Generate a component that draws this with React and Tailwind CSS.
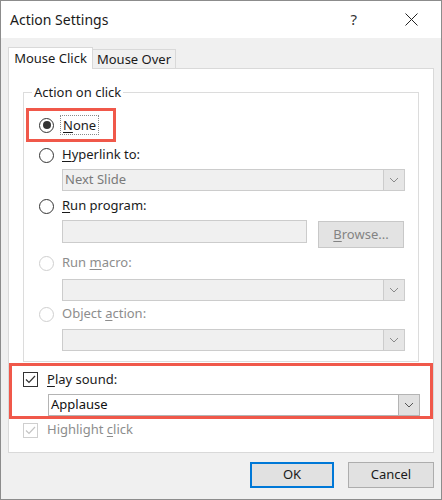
import React from 'react';

const font = { fontFamily: '"Noto Sans", "Open Sans", Arial, sans-serif' };

function Chevron({ color = '#555' }) {
  return (
    <svg width="10" height="6" viewBox="0 0 10 6" fill="none">
      <path d="M1 1l4 4 4-4" stroke={color} strokeWidth="1" />
    </svg>
  );
}

function Combo({ value, disabled, className = '' }) {
  return (
    <div
      className={`flex h-[22px] items-stretch border ${
        disabled ? 'border-[#cccccc] bg-[#f0f0f0]' : 'border-[#b4b4b4] bg-white'
      } ${className}`}
    >
      <div
        className={`flex flex-1 items-center pl-[2px] text-[13px] ${
          disabled ? 'text-[#7a7a7a]' : 'text-[#111]'
        }`}
      >
        {value}
      </div>
      <div
        className={`flex w-[21px] items-center justify-center border-l ${
          disabled ? 'border-[#cccccc] bg-[#e6e6e6]' : 'border-[#b4b4b4] bg-[#e1e1e1]'
        }`}
      >
        <Chevron color={disabled ? '#8a8a8a' : '#555'} />
      </div>
    </div>
  );
}

function Radio({ checked, disabled }) {
  return (
    <span
      className={`flex h-[15px] w-[15px] shrink-0 items-center justify-center rounded-full border bg-white ${
        disabled ? 'border-[#cfcfcf]' : 'border-[#333]'
      }`}
    >
      {checked && <span className="h-[8px] w-[8px] rounded-full bg-[#333]" />}
    </span>
  );
}

function Check({ disabled }) {
  return (
    <span
      className={`flex h-[15px] w-[15px] shrink-0 items-center justify-center border bg-white ${
        disabled ? 'border-[#cfcfcf]' : 'border-[#333]'
      }`}
    >
      <svg width="11" height="9" viewBox="0 0 11 9" fill="none">
        <path d="M1 4.5l3 3L10 1" stroke={disabled ? '#c4c4c4' : '#333'} strokeWidth="1.2" />
      </svg>
    </span>
  );
}

function Key({ children }) {
  return <span className="underline underline-offset-2 decoration-1">{children}</span>;
}

export default function App() {
  return (
    <div
      className="flex h-[500px] w-[442px] flex-col border border-[#8c8c8c] bg-[#f0f0f0] text-[#1a1a1a]"
      style={font}
    >
      <div className="flex h-[37px] shrink-0 items-center bg-white pl-[9px] pr-[23px]">
        <span className="flex-1 text-[14px]">Action Settings</span>
        <span className="mr-[48px] text-[15px] text-[#333]">?</span>
        <svg width="13" height="13" viewBox="0 0 13 13" fill="none">
          <path d="M0.5 0.5l12 12M12.5 0.5l-12 12" stroke="#222" strokeWidth="1" />
        </svg>
      </div>

      <div className="flex flex-1 flex-col px-[7px] pt-[9px]">
        <div className="relative z-10 flex h-[21px] items-end text-[13px]">
          <div className="-mb-px flex h-[22px] w-[85px] items-center justify-center border border-b-0 border-[#d9d9d9] bg-white">
            Mouse Click
          </div>
          <div className="flex h-[19px] w-[83px] items-center justify-center border border-b-0 border-l-0 border-[#d9d9d9] bg-[#f0f0f0] pt-[2px]">
            Mouse Over
          </div>
        </div>

        <div className="flex h-[385px] flex-col border border-[#d9d9d9] bg-white text-[13px]">
          <fieldset className="mx-[14px] mt-[14px] border border-[#dcdcdc] pb-[10px]">
            <legend className="ml-[8px] px-[2px] leading-[18px]">Action on click</legend>

            <div className="ml-[2px] mt-[7px] flex h-[34px] w-[90px] items-center border-[3px] border-[#f0584a] pl-[10px]">
              <Radio checked />
              <span className="ml-[6px] border border-dotted border-[#8a8a8a] px-[2px] leading-[18px]">
                <Key>N</Key>one
              </span>
            </div>

            <div className="ml-[15px] mt-[3px] flex h-[20px] items-center">
              <Radio />
              <span className="ml-[8px]">
                <Key>H</Key>yperlink to:
              </span>
            </div>
            <Combo value="Next Slide" disabled className="ml-[38px] mr-[13px] mt-[4px]" />

            <div className="ml-[15px] mt-[5px] flex h-[20px] items-center">
              <Radio />
              <span className="ml-[8px]">
                <Key>R</Key>un program:
              </span>
            </div>
            <div className="ml-[38px] mr-[14px] mt-[4px] flex h-[28px] items-start justify-between">
              <div className="h-[23px] w-[245px] border border-[#cccccc] bg-[#f0f0f0]" />
              <div className="mt-px flex h-[27px] w-[86px] items-center justify-center border border-[#c8c8c8] bg-[#e3e3e3] text-[#838383]">
                <span>
                  <Key>B</Key>rowse...
                </span>
              </div>
            </div>

            <div className="ml-[15px] mt-[5px] flex h-[20px] items-center text-[#8d8d8d]">
              <Radio disabled />
              <span className="ml-[8px]">
                Run <Key>m</Key>acro:
              </span>
            </div>
            <Combo value="" disabled className="ml-[38px] mr-[13px] mt-[6px]" />

            <div className="ml-[15px] mt-[3px] flex h-[20px] items-center text-[#8d8d8d]">
              <Radio disabled />
              <span className="ml-[8px]">
                Object <Key>a</Key>ction:
              </span>
            </div>
            <Combo value="" disabled className="ml-[38px] mr-[13px] mt-[5px]" />
          </fieldset>

          <div className="mt-px flex h-[56px] flex-col border-[3px] border-[#f0584a]">
            <div className="ml-[11px] mt-[4px] flex h-[19px] items-center">
              <Check />
              <span className="ml-[9px]">
                <Key>P</Key>lay sound:
              </span>
            </div>
            <Combo value="Applause" className="ml-[36px] mr-[10px] mt-[5px]" />
          </div>

          <div className="ml-[14px] mt-[3px] flex h-[16px] items-center text-[#8d8d8d]">
            <Check disabled />
            <span className="ml-[9px]">
              Highlight <Key>c</Key>lick
            </span>
          </div>
        </div>

        <div className="mt-[9px] flex justify-end gap-[14px] text-[13px]">
          <div className="flex h-[26px] w-[84px] items-center justify-center border-2 border-[#0078d7] bg-[#e1e1e1]">
            OK
          </div>
          <div className="flex h-[26px] w-[86px] items-center justify-center border border-[#adadad] bg-[#e1e1e1]">
            Cancel
          </div>
        </div>
      </div>
    </div>
  );
}
